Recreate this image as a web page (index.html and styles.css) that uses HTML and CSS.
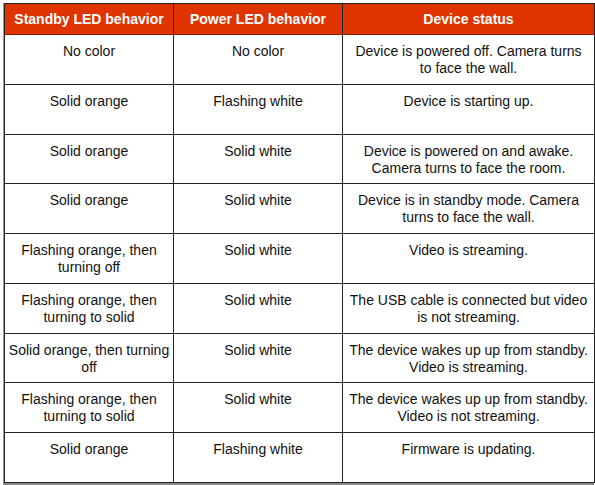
FILE: index.html
```html
<!DOCTYPE html>
<html>
<head>
<meta charset="utf-8">
<link rel="stylesheet" href="styles.css">
</head>
<body>
<div class="frame">
<table class="led">
<colgroup><col class="c1"><col class="c2"><col class="c3"></colgroup>
<thead>
<tr><th>Standby LED behavior</th><th>Power LED behavior</th><th>Device status</th></tr>
</thead>
<tbody>
<tr><td>No color</td><td>No color</td><td class="status">Device is powered off. Camera turns<br>to face the wall.</td></tr>
<tr><td>Solid orange</td><td>Flashing white</td><td class="status">Device is starting up.</td></tr>
<tr><td>Solid orange</td><td>Solid white</td><td class="status">Device is powered on and awake. Camera turns to face the room.</td></tr>
<tr><td>Solid orange</td><td>Solid white</td><td class="status">Device is in standby mode. Camera turns to face the wall.</td></tr>
<tr><td>Flashing orange, then turning off</td><td>Solid white</td><td class="status">Video is streaming.</td></tr>
<tr><td>Flashing orange, then turning to solid</td><td>Solid white</td><td class="status">The USB cable is connected but video is not streaming.</td></tr>
<tr><td>Solid orange, then turning off</td><td>Solid white</td><td class="status">The device wakes up up from standby. Video is streaming.</td></tr>
<tr><td>Flashing orange, then turning to solid</td><td>Solid white</td><td class="status">The device wakes up up from standby. Video is not streaming.</td></tr>
<tr><td>Solid orange</td><td>Flashing white</td><td class="status">Firmware is updating.</td></tr>
</tbody>
</table>
</div>
</body>
</html>
```
FILE: styles.css
```css
html, body {
  margin: 0;
  padding: 0;
  background: #ffffff;
}
body {
  font-family: "Liberation Sans", Arial, sans-serif;
  color: #111111;
}
.frame {
  margin: 3px 0 0 3px;
  width: 590px;
  border-left: 1px solid #9a9a9a;
  border-bottom: 2px solid #888888;
}
.led {
  width: 590px;
  border-collapse: collapse;
  table-layout: fixed;
}
.c1 { width: 169px; }
.c2 { width: 169px; }
.c3 { width: 252px; }
.led th {
  background: #e03400;
  color: #ffffff;
  font-weight: bold;
  font-size: 14px;
  height: 31px;
  padding: 0 4px;
  text-align: center;
  vertical-align: middle;
  border: 1px solid #222222;
  border-bottom: 1px solid #8a1e00;
  box-sizing: border-box;
}
.led td {
  font-size: 14px;
  line-height: 17px;
  height: 49.75px;
  padding: 8px 1px 0 1px;
  text-align: center;
  vertical-align: top;
  border: 1px solid #222222;
  box-sizing: border-box;
}
.led td.status {
  padding-left: 3px;
  padding-right: 3px;
}
```
